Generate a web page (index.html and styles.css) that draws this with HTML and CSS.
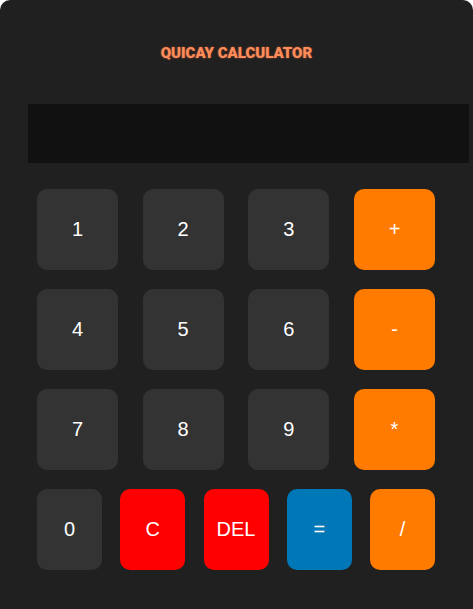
FILE: index.html
```html
<!DOCTYPE html>
<html lang="en">
<head>
  <meta charset="UTF-8" />
  <meta name="viewport" content="width=device-width, initial-scale=1.0"/>
  <title>Quicay Calculator</title>
  <link rel="stylesheet" href="styles.css">
</head>
<body>
  <main class="calculator">
    <h1 class="title">QUICAY CALCULATOR</h1>
    <input type="text" class="display" id="display" readonly />
    <div class="keys">
      <div class="row">
        <button class="key">1</button>
        <button class="key">2</button>
        <button class="key">3</button>
        <button class="key op">+</button>
      </div>
      <div class="row">
        <button class="key">4</button>
        <button class="key">5</button>
        <button class="key">6</button>
        <button class="key op">-</button>
      </div>
      <div class="row">
        <button class="key">7</button>
        <button class="key">8</button>
        <button class="key">9</button>
        <button class="key op">*</button>
      </div>
      <div class="row last">
        <button class="key">0</button>
        <button class="key clear">C</button>
        <button class="key clear">DEL</button>
        <button class="key equals">=</button>
        <button class="key op">/</button>
      </div>
    </div>
  </main>
</body>
</html>
```

FILE: styles.css
```css
body {
  margin: 0;
  height: 609px;
  background: #fff;
  font-family: "Liberation Sans", Arial, sans-serif;
  overflow: hidden;
}
.calculator {
  background: #202020;
  border-radius: 10px;
  box-sizing: border-box;
  height: 640px;
  padding: 45px 28px 0;
}
.title {
  margin: 0;
  text-align: center;
  font-family: Roboto, "Liberation Sans", sans-serif;
  font-weight: 900;
  font-size: 15px;
  line-height: 16px;
  color: #ff8c5a;
  text-shadow: 0 0 2px rgba(255, 120, 60, 0.6);
}
.display {
  display: block;
  box-sizing: content-box;
  width: 100%;
  height: 59px;
  margin-top: 43px;
  padding: 0 12px;
  border: none;
  background: #111;
  color: #fff;
  font-size: 24px;
}
.keys {
  display: flex;
  flex-direction: column;
  gap: 19px;
  margin: 26px 10px 0 9px;
}
.row {
  display: flex;
  justify-content: space-between;
}
.key {
  width: 81px;
  height: 81px;
  border: none;
  border-radius: 10px;
  background: #333;
  color: #fff;
  font-family: "Liberation Sans", Arial, sans-serif;
  font-size: 20px;
  cursor: pointer;
}
.last .key {
  width: 65px;
}
.op {
  background: #ff7b00;
}
.clear {
  background: #ff0000;
}
.equals {
  background: #0077b6;
}
```
